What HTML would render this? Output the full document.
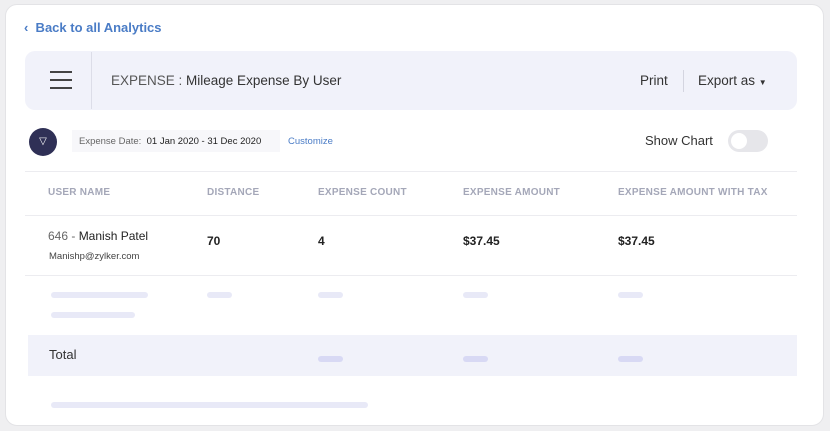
<!DOCTYPE html>
<html><head><style>
*{margin:0;padding:0;box-sizing:border-box}
body{width:830px;height:431px;background:#efeff1;font-family:"Liberation Sans",sans-serif;position:relative;overflow:hidden}
.card{position:absolute;left:5px;top:4px;width:819px;height:422px;background:#fff;border:1px solid #e3e3e6;border-radius:12px}
.a{position:absolute;white-space:nowrap}
.bar{position:absolute;background:#e8e9f7;border-radius:3px;height:6px}
.h{font-size:10px;color:#a4a7b8;font-weight:bold;letter-spacing:.25px;top:187px}
</style></head><body>
<div class="card"></div>
<div class="a" style="left:24px;top:20px;font-size:13px;color:#4a7cc6;font-weight:bold">&#8249;&nbsp; Back to all Analytics</div>
<div class="a" style="left:25px;top:51px;width:772px;height:59px;background:#f1f2fa;border-radius:10px"></div>
<div class="a" style="left:91px;top:52px;width:1px;height:57px;background:#dcdde8"></div>
<div class="a" style="left:50px;top:71px;width:22px;height:2px;background:#444"></div>
<div class="a" style="left:50px;top:79px;width:22px;height:2px;background:#444"></div>
<div class="a" style="left:50px;top:87px;width:22px;height:2px;background:#444"></div>
<div class="a" style="left:111px;top:73px;font-size:13.5px;color:#555">EXPENSE : <span style="color:#333">Mileage Expense By User</span></div>
<div class="a" style="left:640px;top:73px;font-size:13.5px;color:#333">Print</div>
<div class="a" style="left:683px;top:70px;width:1px;height:22px;background:#d4d5e0"></div>
<div class="a" style="left:698px;top:73px;font-size:13.5px;color:#333">Export as <span style="font-size:8px">&#9660;</span></div>
<div class="a" style="left:29px;top:128px;width:28px;height:28px;border-radius:50%;background:#2f3056;color:#fff;font-size:10px;text-align:center;line-height:28px">&#9661;</div>
<div class="a" style="left:72px;top:130px;width:208px;height:22px;background:#f7f7fa"></div>
<div class="a" style="left:79px;top:136px;font-size:9.5px;color:#666">Expense Date:&nbsp; <span style="color:#222">01 Jan 2020 - 31 Dec 2020</span></div>
<div class="a" style="left:288px;top:136px;font-size:9.5px;color:#4a7cc6">Customize</div>
<div class="a" style="left:645px;top:133px;font-size:13px;color:#333">Show Chart</div>
<div class="a" style="left:728px;top:130px;width:40px;height:22px;border-radius:11px;background:#e6e6ea"></div>
<div class="a" style="left:731px;top:133px;width:16px;height:16px;border-radius:50%;background:#fff"></div>
<div class="a" style="left:25px;top:171px;width:772px;height:1px;background:#ececf0"></div>
<div class="a h" style="left:48px">USER NAME</div>
<div class="a h" style="left:207px">DISTANCE</div>
<div class="a h" style="left:318px">EXPENSE COUNT</div>
<div class="a h" style="left:463px">EXPENSE AMOUNT</div>
<div class="a h" style="left:618px">EXPENSE AMOUNT WITH TAX</div>
<div class="a" style="left:25px;top:215px;width:772px;height:1px;background:#ececf0"></div>
<div class="a" style="left:48px;top:229px;font-size:12px;color:#666">646 - <span style="color:#222">Manish Patel</span></div>
<div class="a" style="left:49px;top:251px;font-size:9.5px;color:#444">Manishp@zylker.com</div>
<div class="a" style="left:207px;top:234px;font-size:12px;color:#222;font-weight:bold">70</div>
<div class="a" style="left:318px;top:234px;font-size:12px;color:#222;font-weight:bold">4</div>
<div class="a" style="left:463px;top:234px;font-size:12px;color:#222;font-weight:bold">$37.45</div>
<div class="a" style="left:618px;top:234px;font-size:12px;color:#222;font-weight:bold">$37.45</div>
<div class="a" style="left:25px;top:275px;width:772px;height:1px;background:#ececf0"></div>
<div class="bar" style="left:51px;top:292px;width:97px"></div>
<div class="bar" style="left:51px;top:312px;width:84px"></div>
<div class="bar" style="left:207px;top:292px;width:25px"></div>
<div class="bar" style="left:318px;top:292px;width:25px"></div>
<div class="bar" style="left:463px;top:292px;width:25px"></div>
<div class="bar" style="left:618px;top:292px;width:25px"></div>
<div class="a" style="left:28px;top:335px;width:769px;height:41px;background:#f1f2fa"></div>
<div class="a" style="left:49px;top:347px;font-size:13px;color:#333">Total</div>
<div class="bar" style="left:318px;top:356px;width:25px;background:#d8d9f4"></div>
<div class="bar" style="left:463px;top:356px;width:25px;background:#d8d9f4"></div>
<div class="bar" style="left:618px;top:356px;width:25px;background:#d8d9f4"></div>
<div class="bar" style="left:51px;top:402px;width:317px"></div>
</body></html>
